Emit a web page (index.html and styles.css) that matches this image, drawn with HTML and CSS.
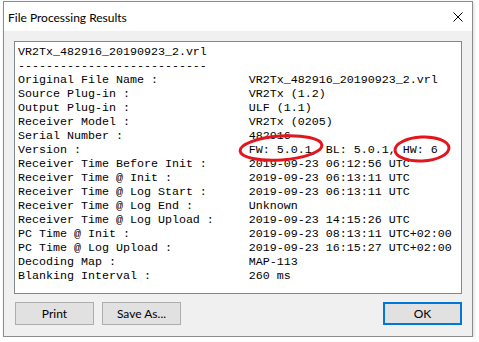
FILE: index.html
```
<!DOCTYPE html>
<html lang="en">

<head>
    <meta charset="UTF-8">
    <title>File Processing Results</title>
    <link rel="stylesheet" href="styles.css">
</head>

<body>
    <div class="window">
        <div class="titlebar">
            <span class="title">File Processing Results</span>
            <svg class="close" width="10" height="10" viewBox="0 0 10 10">
                <path d="M0.5 0.5 L9.5 9.5 M9.5 0.5 L0.5 9.5" stroke="#000" stroke-width="1" fill="none"/>
            </svg>
        </div>

        <div class="client">
            <div class="results">
                <div class="line">VR2Tx_482916_20190923_2.vrl</div>
                <div class="line">---------------------------</div>
                <div class="row"><span>Original File Name :</span><span>VR2Tx_482916_20190923_2.vrl</span></div>
                <div class="row"><span>Source Plug-in :</span><span>VR2Tx (1.2)</span></div>
                <div class="row"><span>Output Plug-in :</span><span>ULF (1.1)</span></div>
                <div class="row"><span>Receiver Model :</span><span>VR2Tx (0205)</span></div>
                <div class="row"><span>Serial Number :</span><span>482916</span></div>
                <div class="row"><span>Version :</span><span>FW: 5.0.1, BL: 5.0.1, HW: 6</span></div>
                <div class="row"><span>Receiver Time Before Init :</span><span>2019-09-23 06:12:56 UTC</span></div>
                <div class="row"><span>Receiver Time @ Init :</span><span>2019-09-23 06:13:11 UTC</span></div>
                <div class="row"><span>Receiver Time @ Log Start :</span><span>2019-09-23 06:13:11 UTC</span></div>
                <div class="row"><span>Receiver Time @ Log End :</span><span>Unknown</span></div>
                <div class="row"><span>Receiver Time @ Log Upload :</span><span>2019-09-23 14:15:26 UTC</span></div>
                <div class="row"><span>PC Time @ Init :</span><span>2019-09-23 08:13:11 UTC+02:00</span></div>
                <div class="row"><span>PC Time @ Log Upload :</span><span>2019-09-23 16:15:27 UTC+02:00</span></div>
                <div class="row"><span>Decoding Map :</span><span>MAP-113</span></div>
                <div class="row"><span>Blanking Interval :</span><span>260 ms</span></div>

                <svg class="marks" width="446" height="251" viewBox="0 0 446 251">
                    <ellipse cx="266" cy="106" rx="41" ry="12" transform="rotate(-4 266 106)" stroke="#e3161d" stroke-width="3" fill="none"/>
                    <ellipse cx="407" cy="107" rx="27" ry="12" transform="rotate(-3 407 107)" stroke="#e3161d" stroke-width="3" fill="none"/>
                </svg>
            </div>

            <div class="buttons">
                <button class="btn">Print</button>
                <button class="btn">Save As...</button>
                <button class="btn default">OK</button>
            </div>
        </div>
    </div>
</body>

</html>
```

FILE: styles.css
```
body {
    margin: 0;
    padding: 0;
    background: #fff;
    font-family: "Segoe UI", Lato, sans-serif;
}

.window {
    margin: 1px 0 0 3px;
    width: 470px;
    height: 336px;
    border: 1px solid #8c8c8c;
    box-sizing: border-box;
    background: #f0f0f0;
    display: flex;
    flex-direction: column;
    box-shadow: 1px 1px 3px rgba(0, 0, 0, 0.15);
}

.titlebar {
    height: 29px;
    background: #fff;
    display: flex;
    align-items: center;
    justify-content: space-between;
    padding: 1px 9px 0 4px;
    box-sizing: border-box;
    flex-shrink: 0;
}

.title {
    font-size: 12px;
    color: #000;
}

.close {
    display: block;
}

.client {
    flex: 1;
    padding: 10px 10px 0;
    display: flex;
    flex-direction: column;
}

.results {
    position: relative;
    height: 253px;
    box-sizing: border-box;
    border: 1px solid #828790;
    background: #fff;
    padding: 3px 3px 0;
    font-family: "Liberation Mono", "Courier New", monospace;
    font-size: 11.67px;
    line-height: 14px;
    color: #000;
}

.line {
    white-space: pre;
}

.row {
    display: grid;
    grid-template-columns: 33ch 1fr;
    white-space: pre;
}

.marks {
    position: absolute;
    left: 0;
    top: 0;
    pointer-events: none;
}

.buttons {
    display: flex;
    gap: 8px;
    margin-top: 8px;
    padding-left: 1px;
}

.btn {
    width: 79px;
    height: 23px;
    background: #e1e1e1;
    border: 1px solid #adadad;
    font-family: "Segoe UI", Lato, sans-serif;
    font-size: 12px;
    color: #000;
    padding: 0;
}

.btn.default {
    margin-left: auto;
    border: 2px solid #0078d7;
}
```
